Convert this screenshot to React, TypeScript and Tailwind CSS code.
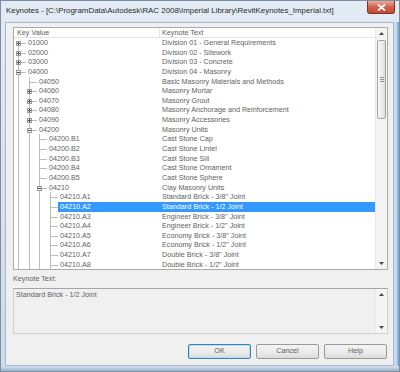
import React from 'react';

type Row = { level: number; key: string; text: string; box?: '+' | '-'; selected?: boolean };

const rows: Row[] = [
  { level: 1, key: '01000', text: 'Division 01 - General Requirements', box: '+' },
  { level: 1, key: '02000', text: 'Division 02 - Sitework', box: '+' },
  { level: 1, key: '03000', text: 'Division 03 - Concrete', box: '+' },
  { level: 1, key: '04000', text: 'Division 04 - Masonry', box: '-' },
  { level: 2, key: '04050', text: 'Basic Masonry Materials and Methods' },
  { level: 2, key: '04060', text: 'Masonry Mortar', box: '+' },
  { level: 2, key: '04070', text: 'Masonry Grout', box: '+' },
  { level: 2, key: '04080', text: 'Masonry Anchorage and Reinforcement', box: '+' },
  { level: 2, key: '04090', text: 'Masonry Accessories', box: '+' },
  { level: 2, key: '04200', text: 'Masonry Units', box: '-' },
  { level: 3, key: '04200.B1', text: 'Cast Stone Cap' },
  { level: 3, key: '04200.B2', text: 'Cast Stone Lintel' },
  { level: 3, key: '04200.B3', text: 'Cast Stone Sill' },
  { level: 3, key: '04200.B4', text: 'Cast Stone Ornament' },
  { level: 3, key: '04200.B5', text: 'Cast Stone Sphere' },
  { level: 3, key: '04210', text: 'Clay Masonry Units', box: '-' },
  { level: 4, key: '04210.A1', text: 'Standard Brick - 3/8" Joint' },
  { level: 4, key: '04210.A2', text: 'Standard Brick - 1/2 Joint', selected: true },
  { level: 4, key: '04210.A3', text: 'Engineer Brick - 3/8" Joint' },
  { level: 4, key: '04210.A4', text: 'Engineer Brick - 1/2" Joint' },
  { level: 4, key: '04210.A5', text: 'Economy Brick - 3/8" Joint' },
  { level: 4, key: '04210.A6', text: 'Economy Brick - 1/2" Joint' },
  { level: 4, key: '04210.A7', text: 'Double Brick - 3/8" Joint' },
  { level: 4, key: '04210.A8', text: 'Double Brick - 1/2" Joint' },
];

// tree guide geometry, relative to the list's inner left edge
const ROW_H = 9.65;
const MID = 5.5;
const centers = [4.5, 15.5, 25.5, 36.5];
const textX = [14, 25, 35, 46];

const font = { fontFamily: '"Liberation Sans", Arial, sans-serif' };

const TreeGuides: React.FC<{ row: Row; first: boolean }> = ({ row, first }) => {
  const w = textX[row.level - 1] - 2;
  const c = centers[row.level - 1];
  return (
    <svg width={w} height={ROW_H} className="shrink-0" shapeRendering="crispEdges">
      {centers.slice(0, row.level - 1).map((x) => (
        <line key={x} x1={x} y1={0} x2={x} y2={ROW_H} stroke="#bdbdbd" />
      ))}
      <line x1={c} y1={first ? MID : 0} x2={c} y2={ROW_H} stroke="#bdbdbd" />
      <line x1={c} y1={MID} x2={w} y2={MID} stroke="#bdbdbd" />
      {row.box && (
        <g>
          <rect x={c - 2} y={MID - 2} width={4} height={4} fill="#fbfbfb" stroke="#9a9a9a" />
          <line x1={c - 1.5} y1={MID} x2={c + 1.5} y2={MID} stroke="#505050" />
          {row.box === '+' && <line x1={c} y1={MID - 1.5} x2={c} y2={MID + 1.5} stroke="#505050" />}
        </g>
      )}
    </svg>
  );
};

const Arrow: React.FC<{ up?: boolean }> = ({ up }) => (
  <svg width="5" height="3" viewBox="0 0 5 3">
    <path d={up ? 'M0 3 L2.5 0 L5 3 Z' : 'M0 0 L5 0 L2.5 3 Z'} fill="#4a4a4a" />
  </svg>
);

const ScrollBar: React.FC<{ thumb?: boolean }> = ({ thumb }) => (
  <div className="w-[12px] shrink-0 flex flex-col bg-[#f4f4f4] border-l border-[#e8e8e8]">
    <div className="h-[11px] flex items-center justify-center">
      <Arrow up />
    </div>
    <div className="flex-1 px-[1px] pt-[1px]">
      {thumb && (
        <div className="h-[79px] rounded-[2px] border border-[#a2a2a2] bg-gradient-to-r from-[#f7f7f7] via-[#ededed] to-[#dedede] flex flex-col items-center justify-center gap-[1px]">
          <div className="w-[4px] h-px bg-[#959595]" />
          <div className="w-[4px] h-px bg-[#959595]" />
          <div className="w-[4px] h-px bg-[#959595]" />
        </div>
      )}
    </div>
    <div className="h-[11px] flex items-center justify-center">
      <Arrow />
    </div>
  </div>
);

const Button: React.FC<{ label: string; isDefault?: boolean }> = ({ label, isDefault }) => (
  <button
    className={`w-[63px] h-[15px] rounded-[2px] border text-[7.2px] text-[#606060] bg-gradient-to-b from-[#f4f4f4] via-[#ececec] to-[#dcdcdc] flex items-center justify-center ${
      isDefault ? 'border-[#3c7fb1] shadow-[inset_0_0_0_1px_#b4def5]' : 'border-[#9a9a9a]'
    }`}
    style={font}
  >
    {label}
  </button>
);

export default function App() {
  return (
    <div
      className="w-[400px] h-[372px] overflow-hidden flex flex-col bg-gradient-to-b from-[#e3ebf4] to-[#cddbea] border border-[#7d8ea1]"
      style={font}
    >
      {/* Title bar */}
      <div className="h-[21px] shrink-0 flex items-start justify-between">
        <div className="pl-[5px] pt-[5px] text-[7.9px] leading-[10px] text-[#2a2a2a] whitespace-nowrap">
          Keynotes - [C:\ProgramData\Autodesk\RAC 2008\Imperial Library\RevitKeynotes_Imperial.txt]
        </div>
        <div className="mr-[4px] w-[28px] h-[13px] rounded-b-[3px] border border-[#7a3328] border-t-0 bg-gradient-to-b from-[#e9ab99] via-[#d2604b] to-[#c44a36] flex items-center justify-center">
          <svg width="9" height="7" viewBox="0 0 9 7">
            <path d="M1 0.5 L8 6.5 M8 0.5 L1 6.5" stroke="#ffffff" strokeWidth="1.8" />
          </svg>
        </div>
      </div>

      <div className="flex flex-1 min-h-0">
        <div className="w-[4px] shrink-0" />
        {/* Client area */}
        <div className="w-[389px] h-[344px] shrink-0 bg-[#f0f0f0] border border-[#a7b7c9] flex flex-col pl-[7px] pr-[5px] pt-[4px]">
          {/* Tree list */}
          <div className="h-[243px] shrink-0 border border-[#ababab] bg-white flex">
            <div className="flex-1 min-w-0 flex flex-col">
              <div className="h-[10px] shrink-0 flex border-b border-[#e5e5e5] text-[7.2px] leading-[9px] text-[#5e5e5e]">
                <div className="w-[146px] shrink-0 pl-[3px] border-r border-[#e5e5e5]">Key Value</div>
                <div className="pl-[2px]">Keynote Text</div>
              </div>
              {rows.map((r, i) => (
                <div key={r.key} className="h-[9.65px] shrink-0 flex text-[7.2px] leading-[9.65px] whitespace-nowrap">
                  <div className="w-[146px] shrink-0 flex">
                    <TreeGuides row={r} first={i === 0} />
                    <div className={`flex-1 pl-[2px] ${r.selected ? 'bg-[#3399ff] text-white' : 'text-[#626262]'}`}>
                      {r.key}
                    </div>
                  </div>
                  <div className={`flex-1 pl-[2px] ${r.selected ? 'bg-[#3399ff] text-white' : 'text-[#626262]'}`}>
                    {r.text}
                  </div>
                </div>
              ))}
            </div>
            <ScrollBar thumb />
          </div>

          {/* Keynote text */}
          <div className="mt-[4px] h-[10px] text-[7.2px] leading-[10px] text-[#626262]">Keynote Text:</div>
          <div className="mt-[4px] h-[46px] shrink-0 border border-[#d0d0d0] border-t-[#a5a5a5] bg-[#f0f0f0] flex">
            <div className="flex-1 pl-[2px] pt-[1px] text-[7.2px] leading-[10px] text-[#626262]">
              Standard Brick - 1/2 Joint
            </div>
            <ScrollBar />
          </div>

          {/* Buttons */}
          <div className="mt-[10px] flex justify-end gap-[5px] pr-[1px]">
            <Button label="OK" isDefault />
            <Button label="Cancel" />
            <Button label="Help" />
          </div>
        </div>
        <div className="flex-1 bg-gradient-to-r from-[#d6e2ef] via-[#bcd3ea] to-[#5a9fdc]" />
      </div>
      <div className="h-[5px] shrink-0 bg-gradient-to-b from-[#d9e4f0] to-[#9bb2ca]" />
    </div>
  );
}
